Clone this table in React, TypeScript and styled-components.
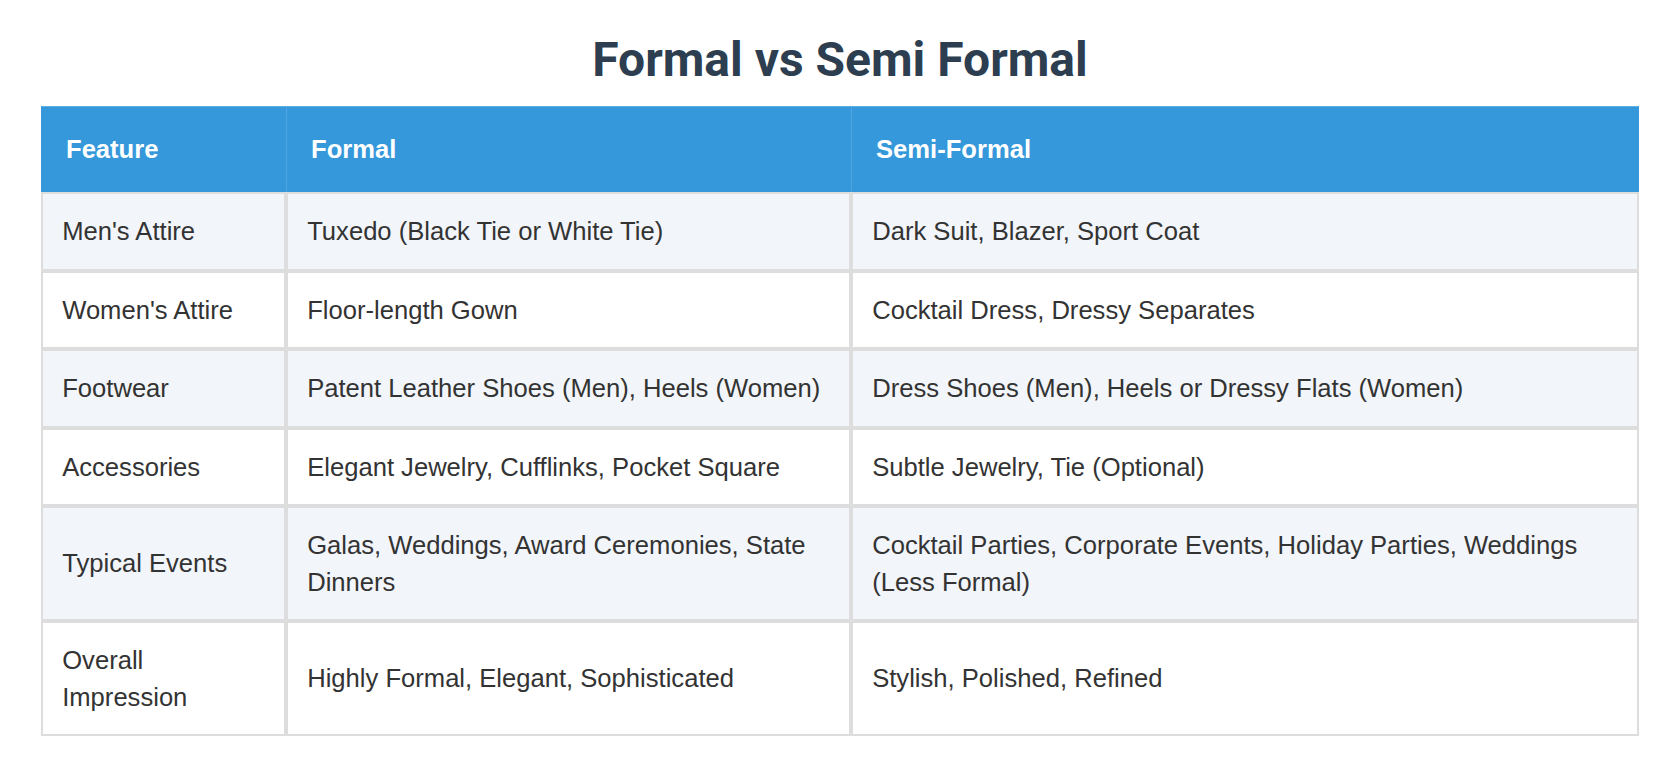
import styled, { createGlobalStyle } from "styled-components";

const GlobalStyle = createGlobalStyle`
  html, body {
    margin: 0;
    padding: 0;
    background: #ffffff;
  }
  body {
    font-family: "Liberation Sans", Arial, sans-serif;
    color: #333333;
  }
`;

const Page = styled.div`
  display: flex;
  flex-direction: column;
  align-items: center;
  padding: 31.5px 0 40px;
`;

const Title = styled.h1`
  margin: 0 0 18.5px;
  font-family: Roboto, "Liberation Sans", sans-serif;
  font-weight: 700;
  font-size: 48px;
  line-height: 56px;
  color: #2c3e50;
  text-align: center;
`;

const Table = styled.table`
  width: 1598px;
  border-collapse: separate;
  border-spacing: 0;
  table-layout: fixed;
`;

const Th = styled.th<{ $width?: number }>`
  box-sizing: border-box;
  width: ${(p) => (p.$width ? `${p.$width}px` : "auto")};
  padding: 24px;
  background: #3498db;
  color: #ffffff;
  font-size: 25.6px;
  font-weight: 700;
  line-height: 36px;
  text-align: left;
  border-top: 1px solid #5eaee4;
  border-left: 1px solid #3498db;
  border-right: 1px solid #3498db;
  border-bottom: 1px solid #3498db;

  & + & {
    border-left-color: #4ea5df;
  }
`;

const Tr = styled.tr<{ $striped: boolean }>`
  background: ${(p) => (p.$striped ? "#f2f5f9" : "#ffffff")};
`;

const Td = styled.td`
  box-sizing: border-box;
  padding: 19px 19.2px;
  border: 2px solid #dddddd;
  font-size: 25.6px;
  line-height: 36.5px;
  color: #333333;
  vertical-align: middle;
`;

const rows = [
  ["Men's Attire", "Tuxedo (Black Tie or White Tie)", "Dark Suit, Blazer, Sport Coat"],
  ["Women's Attire", "Floor-length Gown", "Cocktail Dress, Dressy Separates"],
  ["Footwear", "Patent Leather Shoes (Men), Heels (Women)", "Dress Shoes (Men), Heels or Dressy Flats (Women)"],
  ["Accessories", "Elegant Jewelry, Cufflinks, Pocket Square", "Subtle Jewelry, Tie (Optional)"],
  [
    "Typical Events",
    "Galas, Weddings, Award Ceremonies, State Dinners",
    "Cocktail Parties, Corporate Events, Holiday Parties, Weddings (Less Formal)",
  ],
  ["Overall Impression", "Highly Formal, Elegant, Sophisticated", "Stylish, Polished, Refined"],
];

export default function App() {
  return (
    <>
      <GlobalStyle />
      <Page>
        <Title>Formal vs Semi Formal</Title>
        <Table>
          <thead>
            <tr>
              <Th $width={245}>Feature</Th>
              <Th $width={565}>Formal</Th>
              <Th>Semi-Formal</Th>
            </tr>
          </thead>
          <tbody>
            {rows.map((row, i) => (
              <Tr key={row[0]} $striped={i % 2 === 0}>
                {row.map((cell) => (
                  <Td key={cell}>{cell}</Td>
                ))}
              </Tr>
            ))}
          </tbody>
        </Table>
      </Page>
    </>
  );
}
